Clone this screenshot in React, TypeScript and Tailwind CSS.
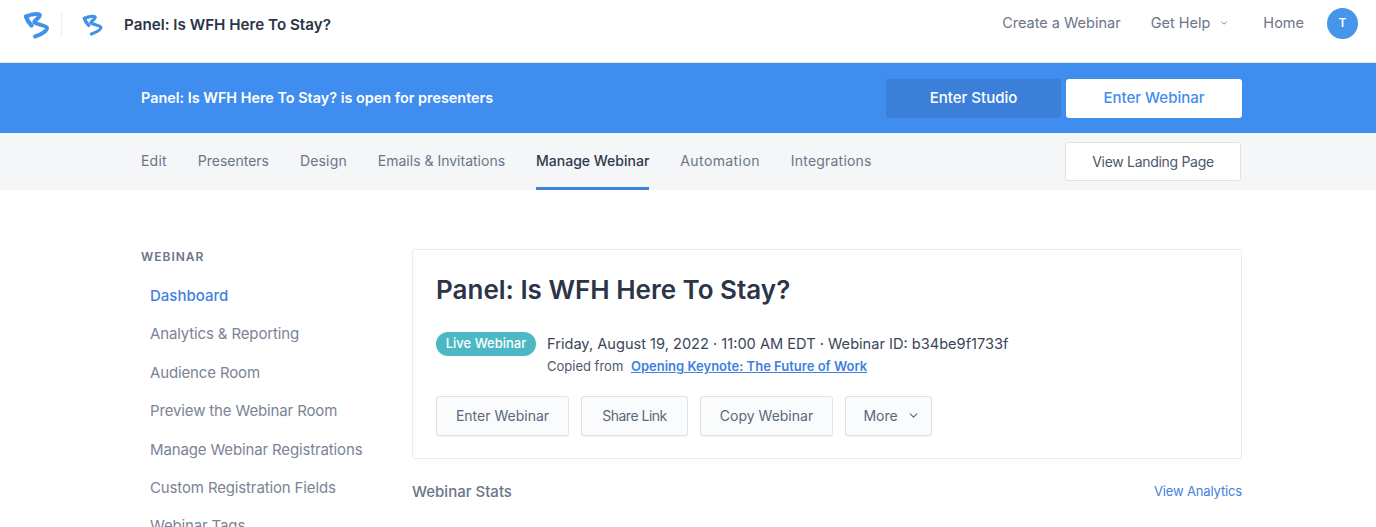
import React from "react";
import { ChevronDown } from "lucide-react";

const Logo = ({ className }: { className: string }) => (
  <svg viewBox="0 0 28 28" className={className} fill="none">
    <path d="M3 5.5 C7 3.6 12 2.8 15.5 3.2 C17.5 3.6 17 5 15 7 C13 9 10.5 10.5 11.5 11.5 C14 13.5 23.5 14.5 24 17 C24.5 20 17.5 23.5 12 25.5" stroke="#4092ea" strokeWidth="4" strokeLinecap="round" strokeLinejoin="round" />
    <path d="M3 5.5 C4 9 6 12 8.5 14.5" stroke="#4092ea" strokeWidth="4.4" strokeLinecap="round" />
  </svg>
);

const tabs = [
  { t: "Edit", c: "tracking-[0.2px] text-[#6b7587] border-transparent" },
  { t: "Presenters", c: "text-[#6b7587] border-transparent" },
  { t: "Design", c: "tracking-[0.15px] text-[#6b7587] border-transparent" },
  { t: "Emails & Invitations", c: "text-[#6b7587] border-transparent" },
  { t: "Manage Webinar", c: "font-medium text-[#2f3a4c] border-[#3f7fe0]" },
  { t: "Automation", c: "tracking-[0.4px] text-[#6b7587] border-transparent" },
  { t: "Integrations", c: "tracking-[0.2px] text-[#6b7587] border-transparent" },
];
const side = ["Analytics & Reporting", "Audience Room", "Preview the Webinar Room", "Manage Webinar Registrations", "Custom Registration Fields", "Webinar Tags"];

const Btn = ({ children, w }: { children: React.ReactNode; w: string }) => (
  <button className={`${w} h-[40px] flex items-center justify-center rounded-[3px] border border-[#dfe3e8] bg-[#fafbfc] pb-[1px] text-[14px] text-[#5c6779] shadow-[0_1px_1px_rgba(0,0,0,0.05)]`}>
    {children}
  </button>
);

export default function App() {
  return (
    <div className="h-[527px] w-[1376px] overflow-hidden bg-white font-['Inter',sans-serif] antialiased">
      <header className="flex h-[63px] items-center border-b border-[#e6e9ee] pl-[23px] pr-[18px]">
        <Logo className="h-[30px] w-[28px] -mt-[12px]" />
        <div className="ml-[10px] h-[24px] w-px -mt-[12px] bg-[#eceef1]" />
        <Logo className="ml-[20px] h-[24px] w-[22px] -mt-[12px]" />
        <span className="ml-[20px] -mt-[11px] text-[15.2px] font-semibold text-[#2b3547]">Panel: Is WFH Here To Stay?</span>
        <nav className="ml-auto -mt-[16px] flex items-center text-[14.5px] text-[#6b7587]">
          <span className="-mt-[1px]">Create a Webinar</span>
          <span className="ml-[30px] -mt-[1px]">Get Help</span>
          <ChevronDown className="ml-[9px] h-[10px] w-[10px]" strokeWidth={2} />
          <span className="ml-[34px] -mt-[1px]">Home</span>
          <span className="ml-[23px] flex h-[31px] w-[31px] items-center justify-center rounded-full bg-[#4596ea] text-[12px] font-semibold text-white">T</span>
        </nav>
      </header>

      <section className="flex h-[70px] items-center bg-[#3f8dee] pl-[141px] pr-[134px]">
        <span className="text-[14.4px] font-semibold text-white">Panel: Is WFH Here To Stay? is open for presenters</span>
        <button className="ml-auto h-[39px] w-[175px] rounded-[3px] bg-[#3c7fd9] text-[15px] font-medium text-white">Enter Studio</button>
        <button className="ml-[5px] h-[39px] w-[176px] rounded-[3px] bg-white text-[15px] font-medium text-[#3f8dee]">Enter Webinar</button>
      </section>

      <nav className="flex h-[57px] items-stretch bg-[#f4f6f8] pl-[141px] pr-[135px]">
        <div className="flex gap-[31px]">
          {tabs.map(({ t, c }) => (
            <span key={t} className={`flex items-center border-b-[3px] pt-[1px] text-[14px] ${c}`}>
              {t}
            </span>
          ))}
        </div>
        <button className="ml-auto self-center h-[39px] w-[176px] rounded-[3px] border border-[#dfe3e8] bg-white pb-[1px] text-[14px] tracking-[-0.3px] text-[#4d586a]">View Landing Page</button>
      </nav>

      <main className="flex pl-[141px] pr-[134px] pt-[59px]">
        <aside className="w-[271px] shrink-0">
          <h3 className="text-[12px] leading-[16px] font-semibold tracking-[1px] text-[#6b7587]">WEBINAR</h3>
          <ul className="mt-[12px] pl-[9px] text-[15px] tracking-[-0.14px] text-[#7a8494]">
            <li className="flex h-[38.4px] items-center font-medium tracking-normal text-[#3f7fe0]">Dashboard</li>
            {side.map((s) => (
              <li key={s} className="flex h-[38.4px] items-center whitespace-nowrap">{s}</li>
            ))}
          </ul>
        </aside>
        <div className="flex-1">
          <div className="h-[210px] rounded-[3px] border border-[#e8ebef] px-[23px] pt-[23px]">
            <h1 className="text-[26px] leading-[34px] font-semibold text-[#2b3547]">Panel: Is WFH Here To Stay?</h1>
            <div className="mt-[25px] flex">
              <span className="flex h-[24px] w-[100px] items-center justify-center rounded-full bg-[#4cb8c4] text-[13px] font-medium text-white">Live Webinar</span>
              <div className="ml-[11px]">
                <p className="text-[14.6px] leading-[24px] text-[#3a4557]">Friday, August 19, 2022 · 11:00 AM EDT · Webinar ID: b34be9f1733f</p>
                <p className="text-[13px] leading-[20px] text-[#4d586a]">
                  Copied from <a className="ml-[4px] font-semibold text-[#3f7fe0] underline">Opening Keynote: The Future of Work</a>
                </p>
              </div>
            </div>
            <div className="mt-[20px] flex gap-[12px]">
              <Btn w="w-[133px]">Enter Webinar</Btn>
              <Btn w="w-[107px] tracking-[-0.5px]">Share Link</Btn>
              <Btn w="w-[133px]">Copy Webinar</Btn>
              <Btn w="w-[87px] pl-[6px]">More<ChevronDown className="ml-[9px] h-[13px] w-[13px]" strokeWidth={2} /></Btn>
            </div>
          </div>
          <div className="mt-[22px] flex items-center justify-between">
            <span className="text-[15px] font-medium text-[#6b7587]">Webinar Stats</span>
            <span className="pb-[2px] text-[13px] tracking-[-0.15px] text-[#3f7fe0]">View Analytics</span>
          </div>
        </div>
      </main>
    </div>
  );
}
